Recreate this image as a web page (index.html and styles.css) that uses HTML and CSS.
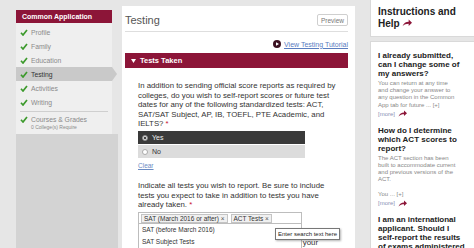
FILE: index.html
```html
<!DOCTYPE html>
<html>
<head>
<meta charset="utf-8">
<link rel="stylesheet" href="styles.css">
</head>
<body>
<aside class="sidebar">
  <div class="brand">Common Application</div>
  <ul class="nav">
    <li class="nav-item"><svg class="check" viewBox="0 0 8 7"><path d="M1 3.8 L3 6 L7 1"/></svg><span>Profile</span></li>
    <li class="nav-item"><svg class="check" viewBox="0 0 8 7"><path d="M1 3.8 L3 6 L7 1"/></svg><span>Family</span></li>
    <li class="nav-item"><svg class="check" viewBox="0 0 8 7"><path d="M1 3.8 L3 6 L7 1"/></svg><span>Education</span></li>
    <li class="nav-item active"><svg class="check" viewBox="0 0 8 7"><path d="M1 3.8 L3 6 L7 1"/></svg><span>Testing</span></li>
    <li class="nav-item"><svg class="check" viewBox="0 0 8 7"><path d="M1 3.8 L3 6 L7 1"/></svg><span>Activities</span></li>
    <li class="nav-item"><svg class="check" viewBox="0 0 8 7"><path d="M1 3.8 L3 6 L7 1"/></svg><span>Writing</span></li>
    <li class="nav-sep"></li>
    <li class="nav-item multi"><svg class="check" viewBox="0 0 8 7"><path d="M1 3.8 L3 6 L7 1"/></svg><span class="nav-text"><span>Courses &amp; Grades</span><span class="sub">0 College(s) Require</span></span></li>
  </ul>
  <div class="sidebar-fill"></div>
</aside>

<main class="main">
  <div class="main-head">
    <h1 class="title">Testing</h1>
    <button class="preview-btn">Preview</button>
  </div>
  <div class="tutorial">
    <svg class="play" viewBox="0 0 8 8"><circle cx="4" cy="4" r="4" fill="#3b1020"/><path d="M3 2.2 L6 4 L3 5.8Z" fill="#fff"/></svg>
    <a class="link">View Testing Tutorial</a>
  </div>
  <div class="section-bar"><svg class="caret" viewBox="0 0 5 4"><path d="M0 0 H5 L2.5 4Z" fill="#fff"/></svg><span>Tests Taken</span></div>
  <div class="section-body">
    <p class="question">In addition to sending official score reports as required by<br>colleges, do you wish to self-report scores or future test<br>dates for any of the following standardized tests: ACT,<br>SAT/SAT Subject, AP, IB, TOEFL, PTE Academic, and<br>IELTS? <span class="req">*</span></p>
    <div class="radios">
      <div class="radio-row yes"><span class="radio on"></span><span>Yes</span></div>
      <div class="radio-row no"><span class="radio"></span><span>No</span></div>
    </div>
    <div class="clear">Clear</div>
    <p class="question second">Indicate all tests you wish to report. Be sure to include<br>tests you expect to take in addition to tests you have<br>already taken. <span class="req">*</span></p>
    <div class="tag-wrap">
      <div class="tag-box">
        <span class="tag">SAT (March 2016 or after) <b>×</b></span>
        <span class="tag">ACT Tests <b>×</b></span>
      </div>
      <ul class="dropdown">
        <li>SAT (before March 2016)</li>
        <li>SAT Subject Tests</li>
      </ul>
      <div class="tooltip">Enter search text here</div>
    </div>
    <p class="below">Report scores as they appear on your</p>
  </div>
</main>

<aside class="help">
  <div class="help-card top">
    <h2 class="help-title">Instructions and<br>Help <svg class="arrow big" viewBox="0 0 9 7"><path d="M0.5 6.5 C1.5 3.5 3.5 2.4 6 2.4 L6 0.4 L9 3.3 L6 6.1 L6 4.2 C4 4.2 2 4.8 0.5 6.5Z"/></svg></h2>
  </div>
  <div class="help-card list">
    <div class="help-item">
      <div class="q">I already submitted,<br>can I change some of<br>my answers?</div>
      <div class="a">You can return at any time<br>and change your answer to<br>any question in the Common<br>App tab for future ... [+]</div>
      <div class="more"><span>[more]</span><svg class="arrow" viewBox="0 0 9 7"><path d="M0.5 6.5 C1.5 3.5 3.5 2.4 6 2.4 L6 0.4 L9 3.3 L6 6.1 L6 4.2 C4 4.2 2 4.8 0.5 6.5Z"/></svg></div>
    </div>
    <div class="help-item">
      <div class="q">How do I determine<br>which ACT scores to<br>report?</div>
      <div class="a">The ACT section has been<br>built to accommodate current<br>and previous versions of the<br>ACT.<br>&nbsp;<br>You ... [+]</div>
      <div class="more"><span>[more]</span><svg class="arrow" viewBox="0 0 9 7"><path d="M0.5 6.5 C1.5 3.5 3.5 2.4 6 2.4 L6 0.4 L9 3.3 L6 6.1 L6 4.2 C4 4.2 2 4.8 0.5 6.5Z"/></svg></div>
    </div>
    <div class="help-item">
      <div class="q">I am an international<br>applicant. Should I<br>self-report the results<br>of exams administered</div>
    </div>
  </div>
</aside>
</body>
</html>
```

FILE: styles.css
```css
* { box-sizing: border-box; }
html, body { margin: 0; padding: 0; }
body {
  width: 474px;
  height: 248px;
  overflow: hidden;
  background: #e6e6e6;
  font-family: "Liberation Sans", Arial, sans-serif;
  display: flex;
  align-items: stretch;
}

/* Sidebar */
.sidebar {
  margin: 10px 0 0 16px;
  width: 102px;
  display: flex;
  flex-direction: column;
}
.brand {
  width: 96px;
  height: 13px;
  background: #8c1538;
  color: #fff;
  font-weight: bold;
  font-size: 7px;
  line-height: 13px;
  padding-left: 6px;
  white-space: nowrap;
}
.nav {
  list-style: none;
  margin: 0;
  width: 96px;
  background: #efefef;
  padding: 2px 0 3px;
}
.nav-item {
  position: relative;
  height: 14px;
  display: flex;
  align-items: center;
  gap: 3px;
  padding-left: 4px;
  font-size: 6.8px;
  color: #8a8a8a;
  white-space: nowrap;
}
.nav-item.active {
  background: #c9c9c9;
  color: #333;
}
.nav-item.active::after {
  content: "";
  position: absolute;
  left: 100%;
  top: 0;
  border-left: 5px solid #c9c9c9;
  border-top: 7px solid transparent;
  border-bottom: 7px solid transparent;
}
.check {
  width: 8px;
  height: 7px;
  flex: none;
}
.check path {
  fill: none;
  stroke: #3c9a2c;
  stroke-width: 1.7;
}
.nav-sep {
  height: 1px;
  background: #cfcfcf;
  margin: 2px 4px 1px;
}
.nav-item.multi {
  height: auto;
  align-items: flex-start;
  padding-top: 2px;
}
.nav-item.multi .check { margin-top: 1px; }
.nav-text {
  display: flex;
  flex-direction: column;
  line-height: 9px;
}
.nav-text .sub {
  font-size: 5px;
  line-height: 7px;
  color: #8a8a8a;
}
.sidebar-fill {
  flex: 1;
  background: #d3d3d3;
}

/* Main */
.main {
  margin: 6px 0 0 4px;
  width: 233px;
  background: #fff;
}
.main-head {
  display: flex;
  justify-content: space-between;
  align-items: center;
  margin: 0 7px 0 3px;
  padding: 7px 0 4px;
  border-bottom: 1px solid #dedede;
}
.title {
  margin: 0;
  font-size: 11px;
  line-height: 14px;
  font-weight: normal;
  color: #555;
}
.preview-btn {
  font-family: "Liberation Sans", Arial, sans-serif;
  font-size: 6.5px;
  color: #777;
  background: #fff;
  border: 1px solid #cfcfcf;
  border-radius: 2px;
  height: 12px;
  width: 31px;
  padding: 0;
}
.tutorial {
  display: flex;
  justify-content: flex-end;
  align-items: center;
  gap: 3px;
  margin: 7px 7px 0 0;
  height: 10px;
}
.play { width: 8px; height: 8px; }
.link {
  font-size: 7px;
  color: #5a7cbf;
  text-decoration: underline;
}
.section-bar {
  margin: 4px 7px 0 3px;
  height: 15px;
  background: #8c1538;
  color: #fff;
  font-weight: bold;
  font-size: 7.5px;
  display: flex;
  align-items: center;
  gap: 4px;
  padding-left: 6px;
}
.caret { width: 5px; height: 4px; }
.section-body {
  padding: 13px 0 0 16px;
}
.question {
  margin: 0;
  font-size: 7.8px;
  line-height: 9.5px;
  color: #333;
  white-space: nowrap;
}
.req { color: #c8102e; }
.radios {
  margin-top: 2.5px;
  width: 167px;
}
.radio-row {
  height: 13px;
  display: flex;
  align-items: center;
  gap: 4px;
  padding-left: 4px;
  font-size: 7px;
}
.radio-row.yes { background: #3a3a3a; color: #eee; }
.radio-row.no { background: #dcdcdc; color: #333; margin-top: 1px; }
.radio {
  width: 6px;
  height: 6px;
  border-radius: 50%;
  background: #fff;
  border: 1px solid #aaa;
}
.radio.on {
  background: radial-gradient(circle, #444 0 1.3px, #ddd 1.6px);
  border-color: #999;
}
.clear {
  margin-top: 3px;
  font-size: 6.5px;
  line-height: 9px;
  color: #6b8cc4;
  text-decoration: underline;
}
.question.second { margin-top: 11px; }
.tag-wrap {
  position: relative;
  margin-top: 2.5px;
  width: 164px;
}
.tag-box {
  height: 12px;
  border: 1px solid #bdbdbd;
  display: flex;
  align-items: center;
  gap: 3px;
  padding-left: 2px;
}
.tag {
  border: 1px solid #c4c4c4;
  background: #f0f0f0;
  font-size: 6.5px;
  height: 9px;
  line-height: 7px;
  padding: 0 2px;
  color: #333;
  white-space: nowrap;
}
.tag b { font-weight: normal; color: #555; }
.dropdown {
  position: absolute;
  top: 100%;
  left: 0;
  width: 164px;
  margin: 0;
  padding: 0;
  list-style: none;
  background: #fff;
  border: 1px solid #bdbdbd;
  border-top: none;
}
.dropdown li {
  height: 12px;
  line-height: 12px;
  font-size: 6.5px;
  color: #333;
  padding-left: 3px;
}
.tooltip {
  position: absolute;
  left: 137px;
  top: 16px;
  font-size: 6px;
  line-height: 8px;
  color: #222;
  background: #fff;
  border: 1px solid #777;
  padding: 1px 2px;
  white-space: nowrap;
  box-shadow: 1px 1px 2px rgba(0,0,0,.3);
  z-index: 2;
}
.below {
  margin: 14px 0 0;
  width: 180px;
  text-align: right;
  font-size: 7.8px;
  line-height: 9.5px;
  color: #333;
  white-space: nowrap;
}

/* Help column */
.help {
  margin-left: 15px;
  flex: 1;
  display: flex;
  flex-direction: column;
  gap: 4px;
}
.help-card {
  background: #fff;
  border: 1px solid #d9d9d9;
  border-right: none;
  padding-left: 7px;
}
.help-card.top {
  border-top: none;
  padding-top: 6px;
  padding-bottom: 6px;
}
.help-title {
  margin: 0;
  font-size: 10px;
  line-height: 12px;
  font-weight: bold;
  color: #222;
  white-space: nowrap;
}
.arrow {
  width: 9px;
  height: 7px;
}
.arrow path { fill: #8c1538; }
.arrow.big { width: 10px; height: 8px; }
.help-card.list {
  flex: 1;
  padding-top: 9px;
}
.help-item + .help-item { margin-top: 8px; }
.q {
  font-size: 8px;
  line-height: 9px;
  font-weight: bold;
  color: #222;
  white-space: nowrap;
}
.a {
  margin-top: 2px;
  font-size: 6px;
  line-height: 7.2px;
  color: #888;
  white-space: nowrap;
}
.more {
  margin-top: 1px;
  height: 8px;
  display: flex;
  align-items: center;
  gap: 3px;
  font-size: 6px;
  color: #8a90b4;
}
```
